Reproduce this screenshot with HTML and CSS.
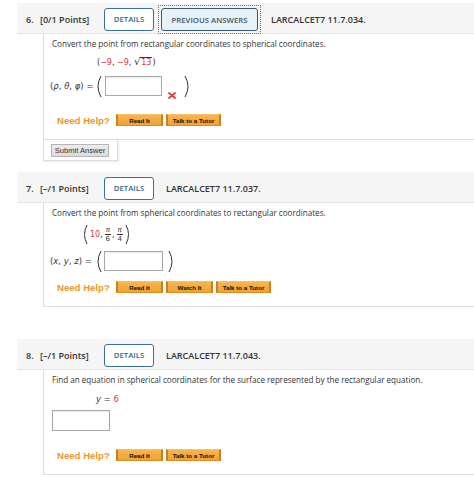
FILE: index.html
```html
<!DOCTYPE html>
<html>
<head>
<meta charset="utf-8">
<link rel="stylesheet" href="styles.css">
</head>
<body>
<div class="page">

  <section class="q q1">
    <div class="qhead">
      <span class="qnum">6.</span>
      <span class="qpts">[0/1 Points]</span>
      <span class="btn-details">DETAILS</span>
      <span class="focus-ring"><span class="btn-prev">PREVIOUS ANSWERS</span></span>
      <span class="qcode">LARCALCET7 11.7.034.</span>
    </div>
    <div class="qbody">
      <p class="prompt">Convert the point from rectangular coordinates to spherical coordinates.</p>
      <div class="math given">(<span class="red">−9</span>, <span class="red">−9</span>, <span class="sqrt"><span class="rad">√</span><span class="radicand red">13</span></span>)</div>
      <div class="answer-row">
        <span class="math lhs">(<i>ρ</i>, <i>θ</i>, <i>φ</i>) =</span>
        <svg class="paren" width="7" height="23" viewBox="0 0 7 23"><path d="M6 1 Q0 11.5 6 22" fill="none" stroke="#333" stroke-width="1"/></svg>
        <span class="input w57"></span>
        <svg class="xmark" width="8" height="7" viewBox="0 0 8 7"><path d="M1 1 L7 6 M7 1 L1 6" stroke="#e0393e" stroke-width="1.8" stroke-linecap="round"/></svg>
        <svg class="paren close" width="7" height="23" viewBox="0 0 7 23"><path d="M1 1 Q7 11.5 1 22" fill="none" stroke="#333" stroke-width="1"/></svg>
      </div>
      <div class="help">
        <span class="need">Need Help?</span>
        <span class="hbtn w47">Read It</span>
        <span class="hbtn w55">Talk to a Tutor</span>
      </div>
    </div>
    <div class="submit-row">
      <span class="submit">Submit Answer</span>
    </div>
  </section>

  <section class="q q2">
    <div class="qhead">
      <span class="qnum">7.</span>
      <span class="qpts">[–/1 Points]</span>
      <span class="btn-details">DETAILS</span>
      <span class="qcode">LARCALCET7 11.7.037.</span>
    </div>
    <div class="qbody">
      <p class="prompt">Convert the point from spherical coordinates to rectangular coordinates.</p>
      <div class="math given2"><svg class="paren" width="6" height="21" viewBox="0 0 6 21"><path d="M5 1 Q0 10.5 5 20" fill="none" stroke="#333" stroke-width="1"/></svg><span class="red ten">10</span><span class="comma">,</span><span class="frac"><span class="num"><i>π</i></span><span class="den">6</span></span><span class="comma">,</span><span class="frac"><span class="num"><i>π</i></span><span class="den">4</span></span><svg class="paren" width="6" height="21" viewBox="0 0 6 21"><path d="M1 1 Q6 10.5 1 20" fill="none" stroke="#333" stroke-width="1"/></svg></div>
      <div class="answer-row r2">
        <span class="math lhs">(<i>x</i>, <i>y</i>, <i>z</i>) =</span>
        <svg class="paren" width="7" height="23" viewBox="0 0 7 23"><path d="M6 1 Q0 11.5 6 22" fill="none" stroke="#333" stroke-width="1"/></svg>
        <span class="input w59"></span>
        <svg class="paren close2" width="7" height="23" viewBox="0 0 7 23"><path d="M1 1 Q7 11.5 1 22" fill="none" stroke="#333" stroke-width="1"/></svg>
      </div>
      <div class="help h2">
        <span class="need">Need Help?</span>
        <span class="hbtn w47">Read It</span>
        <span class="hbtn w47">Watch It</span>
        <span class="hbtn w55">Talk to a Tutor</span>
      </div>
    </div>
  </section>

  <section class="q q3">
    <div class="qhead">
      <span class="qnum">8.</span>
      <span class="qpts">[–/1 Points]</span>
      <span class="btn-details">DETAILS</span>
      <span class="qcode">LARCALCET7 11.7.043.</span>
    </div>
    <div class="qbody">
      <p class="prompt">Find an equation in spherical coordinates for the surface represented by the rectangular equation.</p>
      <div class="math given3"><i>y</i> = <span class="red">6</span></div>
      <span class="input w58 solo"></span>
      <div class="help h3">
        <span class="need">Need Help?</span>
        <span class="hbtn w47">Read It</span>
        <span class="hbtn w55">Talk to a Tutor</span>
      </div>
    </div>
  </section>

</div>
</body>
</html>
```
FILE: styles.css
```css
* { box-sizing: border-box; }
html, body { margin: 0; padding: 0; background: #fff; }
body { width: 474px; height: 477px; overflow: hidden; font-family: "Open Sans", "Liberation Sans", sans-serif; color: #333; }

.page { padding-top: 3px; }

.q { margin-left: 17px; }
.q2 { margin-top: 11px; }
.q3 { margin-top: 32px; }

.qhead {
  height: 31px;
  background: #f5f5f5;
  border-bottom: 1px solid #e6e6e6;
  display: flex;
  align-items: center;
  padding-left: 9px;
  padding-top: 2px;
  font-size: 9px;
  font-weight: 600;
  color: #333;
}
.qnum { width: 14px; }
.qpts { width: 64px; }

.btn-details {
  width: 50px; height: 23px;
  border: 1px solid #3b7192;
  border-radius: 3px;
  background: #fff;
  color: #2f6a8c;
  font-size: 7.8px;
  font-weight: 600;
  display: flex; align-items: center; justify-content: center;
}
.focus-ring {
  margin-left: 4px;
  padding: 2px;
  border: 1px dotted #3a7ac0;
  display: flex;
  margin-top: 1px;
}
.btn-prev {
  width: 97px; height: 23px;
  border: 1px solid #3c5a6d;
  border-radius: 3px;
  background: #e7f1f8;
  color: #3d5668;
  font-size: 7.8px;
  font-weight: 600;
  display: flex; align-items: center; justify-content: center;
}
.qcode { margin-left: 12px; }
.q1 .qcode { margin-left: 10px; }

.qbody {
  margin-left: 26px;
  border-left: 1px solid #ddd;
  border-bottom: 1px solid #ddd;
  padding-left: 8px;
  padding-top: 4px;
}
.q1 .qbody { height: 106px; }
.q2 .qbody { height: 104px; }
.q3 .qbody { height: 105px; }

.prompt {
  margin: 0;
  font-size: 8.1px;
  line-height: 12px;
  color: #333;
}

.math {
  font-family: "DejaVu Sans", Verdana, sans-serif;
  font-size: 8.5px;
  color: #333;
}
.red { color: #d8343a; }

.given { margin-left: 45px; margin-top: 6px; line-height: 12px; height: 12px; font-size: 8px; }
.sqrt { display: inline-flex; align-items: flex-end; }
.rad { font-size: 10px; line-height: 11px; }
.radicand { border-top: 1px solid #333; line-height: 9px; padding: 0 1px; }

.answer-row {
  display: flex;
  align-items: center;
  margin-top: 7px;
  height: 22px;
  margin-left: -2px;
}
.lhs { width: 45px; }
.paren { display: block; }
.input {
  display: block;
  height: 20px;
  border: 1px solid #a8a8a8;
  box-shadow: inset 0 1px 1px rgba(0,0,0,0.08);
  background: #fff;
  margin-left: 3px;
}
.w57 { width: 57px; }
.w59 { width: 59px; }
.w58 { width: 58px; height: 21px; }
.xmark { align-self: flex-end; margin-left: 6px; margin-bottom: -2px; }
.close { margin-left: 8px; }
.close2 { margin-left: 5px; }

.r2 { margin-top: 6px; }
.r2 .input { margin-left: 2px; }

.help {
  display: flex;
  align-items: center;
  margin-top: 17px;
  margin-left: 5px;
  height: 12px;
}
.h2 { margin-top: 9px; }
.h3 { margin-top: 18px; }
.need {
  font-family: "Liberation Sans", Arial, sans-serif;
  font-weight: bold;
  font-size: 9.6px;
  color: #f0952d;
  width: 59px;
}
.hbtn {
  height: 12px;
  background: linear-gradient(#f7b54f, #f1a233);
  border-left: 2px solid #c9811f;
  border-right: 2px solid #c9811f;
  border-top: 1px solid #f8c067;
  border-bottom: 1px solid #d98d22;
  font-family: "Liberation Sans", Arial, sans-serif;
  font-weight: bold;
  font-size: 6.2px;
  color: #111;
  display: flex; align-items: center; justify-content: center;
  margin-right: 3px;
}
.w47 { width: 47px; }
.w55 { width: 55px; }

.submit-row {
  margin-left: 26px;
  width: 75px;
  height: 21px;
  border-left: 1px solid #ddd;
  border-right: 1px solid #ddd;
  border-bottom: 1px solid #ddd;
  box-shadow: 1px 1px 2px rgba(0,0,0,0.08);
  padding-left: 7px;
  padding-top: 4px;
}
.submit {
  display: flex; align-items: center; justify-content: center;
  width: 58px; height: 13px;
  background: linear-gradient(#ececec, #dcdcdc);
  border: 1px solid #b5b5b5;
  font-family: "Liberation Sans", Arial, sans-serif;
  font-size: 7.6px;
  color: #333;
}

.given2 {
  display: flex;
  align-items: center;
  margin-left: 30px;
  margin-top: 5px;
  height: 20px;
}
.ten { margin-left: 2px; font-size: 8px; }
.comma { margin-right: 2px; font-size: 8px; }
.frac {
  display: inline-flex;
  flex-direction: column;
  align-items: center;
  margin-right: 1px;
  line-height: 8px;
  font-size: 7px;
}
.frac .num { border-bottom: 1px solid #333; padding: 0 1px; }
.given2 .paren:last-child { margin-left: 1px; }

.given3 { margin-left: 44px; margin-top: 7px; line-height: 12px; }
.solo { margin-top: 5px; margin-left: 0; }
```
